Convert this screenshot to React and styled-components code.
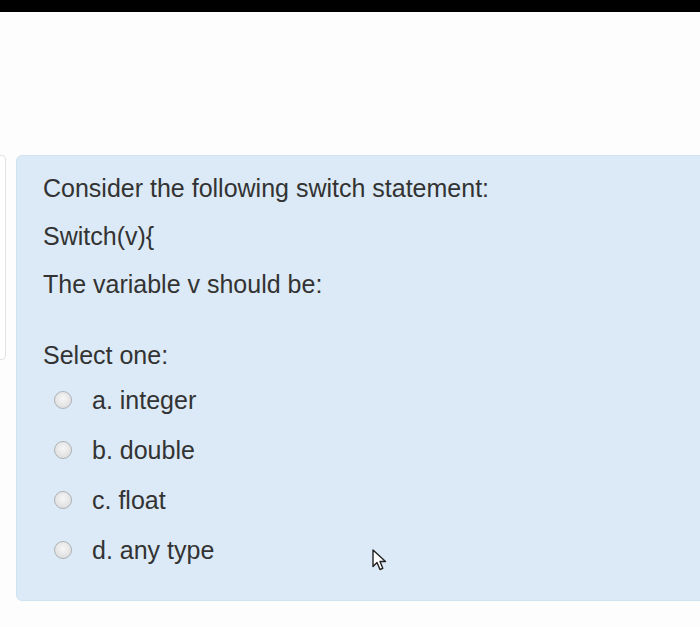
import styled, { createGlobalStyle } from "styled-components";

const GlobalStyle = createGlobalStyle`
  html, body {
    margin: 0;
    padding: 0;
    background: #fdfdfd;
    overflow: hidden;
  }
  body {
    font-family: "Liberation Sans", Arial, sans-serif;
  }
`;

const TopBar = styled.div`
  height: 12px;
  background: #000;
`;

const Page = styled.div`
  display: flex;
  align-items: flex-start;
  gap: 10px;
  padding-top: 143px;
  height: 472px;
`;

const SideCard = styled.div`
  width: 14px;
  margin-left: -8px;
  height: 205px;
  background: #fff;
  border: 1px solid #e2e2e2;
  border-radius: 4px;
  box-sizing: border-box;
`;

const Question = styled.div`
  position: relative;
  flex: 1;
  margin-right: -20px;
  background: #dbeaf6;
  border: 1px solid #cfe2ef;
  border-radius: 6px;
  padding: 8px 0 25px 26px;
  color: #333;
  font-size: 25px;
`;

const Line = styled.p`
  margin: 0;
  line-height: 48px;
  height: 48px;
`;

const Prompt = styled.div`
  margin-top: 27px;
  line-height: 40px;
  height: 40px;
`;

const Options = styled.div`
  display: flex;
  flex-direction: column;
`;

const Option = styled.label`
  display: flex;
  align-items: center;
  height: 50px;
  padding-left: 11px;
  gap: 20px;
`;

const Radio = styled.span`
  width: 18px;
  height: 18px;
  border-radius: 50%;
  border: 1px solid #adb2b8;
  background: radial-gradient(circle at 50% 40%, #f6f6f6 0%, #d8d8d8 100%);
  box-sizing: border-box;
`;

const Cursor = styled.svg`
  position: absolute;
  left: 355px;
  top: 393px;
`;

const options = ["a. integer", "b. double", "c. float", "d. any type"];

export default function App() {
  return (
    <>
      <GlobalStyle />
      <TopBar />
      <Page>
        <SideCard />
        <Question>
          <Line>Consider the following switch statement:</Line>
          <Line>Switch(v){"{"}</Line>
          <Line>The variable v should be:</Line>
          <Prompt>Select one:</Prompt>
          <Options>
            {options.map((o) => (
              <Option key={o}>
                <Radio />
                {o}
              </Option>
            ))}
          </Options>
          <Cursor width="16" height="22" viewBox="0 0 16 22">
            <path
              d="M1 1 L1 17.5 L5 13.5 L8 20.5 L10.8 19.3 L8 12.5 L13.5 12.5 Z"
              fill="#fff"
              stroke="#222"
              strokeWidth="1.4"
              strokeLinejoin="round"
            />
          </Cursor>
        </Question>
      </Page>
    </>
  );
}
